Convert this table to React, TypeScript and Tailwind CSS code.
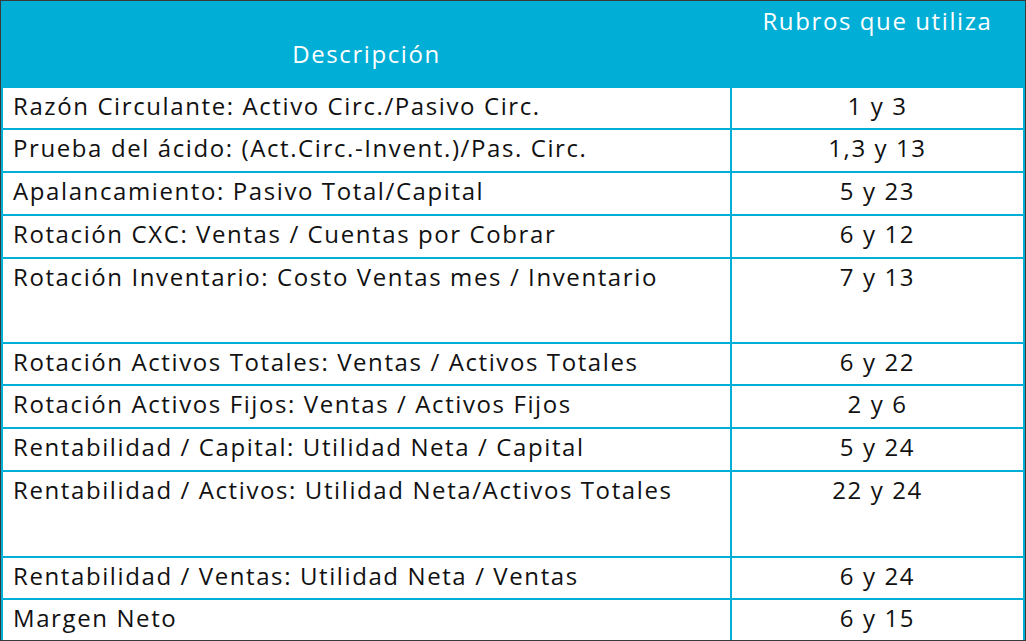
import * as React from "react";

const rows = [
  { desc: "Razón Circulante: Activo Circ./Pasivo Circ.", rubros: "1 y 3", h: "h-[40px]" },
  { desc: "Prueba del ácido: (Act.Circ.-Invent.)/Pas. Circ.", rubros: "1,3 y 13", h: "h-[43px]" },
  { desc: "Apalancamiento: Pasivo Total/Capital", rubros: "5 y 23", h: "h-[43px]" },
  { desc: "Rotación CXC: Ventas / Cuentas por Cobrar", rubros: "6 y 12", h: "h-[43px]" },
  { desc: "Rotación Inventario: Costo Ventas mes / Inventario", rubros: "7 y 13", h: "h-[85px]" },
  { desc: "Rotación Activos Totales: Ventas / Activos Totales", rubros: "6 y 22", h: "h-[42px]" },
  { desc: "Rotación Activos Fijos: Ventas / Activos Fijos", rubros: "2 y 6", h: "h-[43px]" },
  { desc: "Rentabilidad / Capital: Utilidad Neta / Capital", rubros: "5 y 24", h: "h-[43px]" },
  { desc: "Rentabilidad / Activos: Utilidad Neta/Activos Totales", rubros: "22 y 24", h: "h-[86px]" },
  { desc: "Rentabilidad / Ventas: Utilidad Neta / Ventas", rubros: "6 y 24", h: "h-[42px]" },
  { desc: "Margen Neto", rubros: "6 y 15", h: "h-[42px]" },
];

export default function App() {
  return (
    <div
      className="w-[1026px] h-[641px] border border-[#3a3a3a] bg-white flex flex-col overflow-hidden text-[24px] leading-[28px] tracking-[1.6px] text-[#111]"
      style={{ fontFamily: '"Open Sans", "Noto Sans", sans-serif' }}
    >
      {/* header */}
      <div className="h-[87px] shrink-0 bg-[#00aed6] flex text-white">
        <div className="w-[731px] flex items-end justify-center pb-[20px]">Descripción</div>
        <div className="flex-1 flex justify-center pt-[6px] pr-[2px]">Rubros que utiliza</div>
      </div>

      {/* body */}
      <div className="flex-1 flex flex-col border-x-2 border-[#00aed6]">
        {rows.map((r, i) => (
          <div
            key={r.desc}
            className={`flex shrink-0 ${r.h} ${i > 0 ? "border-t-2 border-[#00aed6]" : ""}`}
          >
            <div className="w-[729px] border-r-2 border-[#00aed6] pl-[10px] pt-[4px] whitespace-nowrap">
              {r.desc}
            </div>
            <div className="flex-1 text-center pt-[4px]">{r.rubros}</div>
          </div>
        ))}
      </div>
    </div>
  );
}
